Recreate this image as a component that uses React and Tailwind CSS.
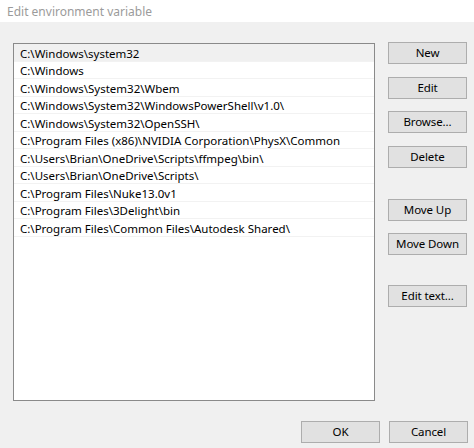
import React from "react";

const paths = [
  "C:\\Windows\\system32",
  "C:\\Windows",
  "C:\\Windows\\System32\\Wbem",
  "C:\\Windows\\System32\\WindowsPowerShell\\v1.0\\",
  "C:\\Windows\\System32\\OpenSSH\\",
  "C:\\Program Files (x86)\\NVIDIA Corporation\\PhysX\\Common",
  "C:\\Users\\Brian\\OneDrive\\Scripts\\ffmpeg\\bin\\",
  "C:\\Users\\Brian\\OneDrive\\Scripts\\",
  "C:\\Program Files\\Nuke13.0v1",
  "C:\\Program Files\\3Delight\\bin",
  "C:\\Program Files\\Common Files\\Autodesk Shared\\",
];

// side buttons with their top spacing
const actions = [
  { label: "New", mt: "mt-0" },
  { label: "Edit", mt: "mt-[13px]" },
  { label: "Browse...", mt: "mt-[12px]" },
  { label: "Delete", mt: "mt-[13px]" },
  { label: "Move Up", mt: "mt-[31px]" },
  { label: "Move Down", mt: "mt-[12px]" },
  { label: "Edit text...", mt: "mt-[30px]" },
];

const Button = ({ children, className = "" }) => (
  <button
    className={`h-[22px] w-[79px] border border-[#adadad] bg-[#e1e1e1] text-[11.5px] tracking-[-0.1px] text-black leading-none ${className}`}
  >
    {children}
  </button>
);

export default function App() {
  return (
    <div
      className="w-[474px] h-[448px] flex flex-col overflow-hidden bg-[#f0f0f0]"
      style={{ fontFamily: '"Noto Sans", "Open Sans", sans-serif' }}
    >
      {/* title bar */}
      <div className="h-[22px] bg-white flex items-center pl-[7px] pt-[1px] text-[12px] text-[#9b9b9b]">
        Edit environment variable
      </div>

      <div className="flex-1 flex flex-col pl-[13px] pr-[5px] pt-[20px]">
        <div className="flex items-start">
          {/* path list */}
          <div className="mt-[1px] w-[362px] h-[358px] border border-[#8a8a8a] bg-white">
            {paths.map((p, i) => (
              <div
                key={i}
                className={`h-[17.5px] flex items-center pl-[6px] pt-[2px] text-[11.5px] text-black whitespace-nowrap border-b border-[#f2f2f2] ${
                  i === 0 ? "bg-[#f0f0f0]" : ""
                }`}
              >
                {p}
              </div>
            ))}
          </div>

          <div className="ml-[13px] flex flex-col">
            {actions.map((a) => (
              <Button key={a.label} className={a.mt}>
                {a.label}
              </Button>
            ))}
          </div>
        </div>

        {/* dialog buttons */}
        <div className="mt-[20px] flex justify-end gap-[9px] pr-[1px]">
          <Button>OK</Button>
          <Button>Cancel</Button>
        </div>
      </div>
    </div>
  );
}
